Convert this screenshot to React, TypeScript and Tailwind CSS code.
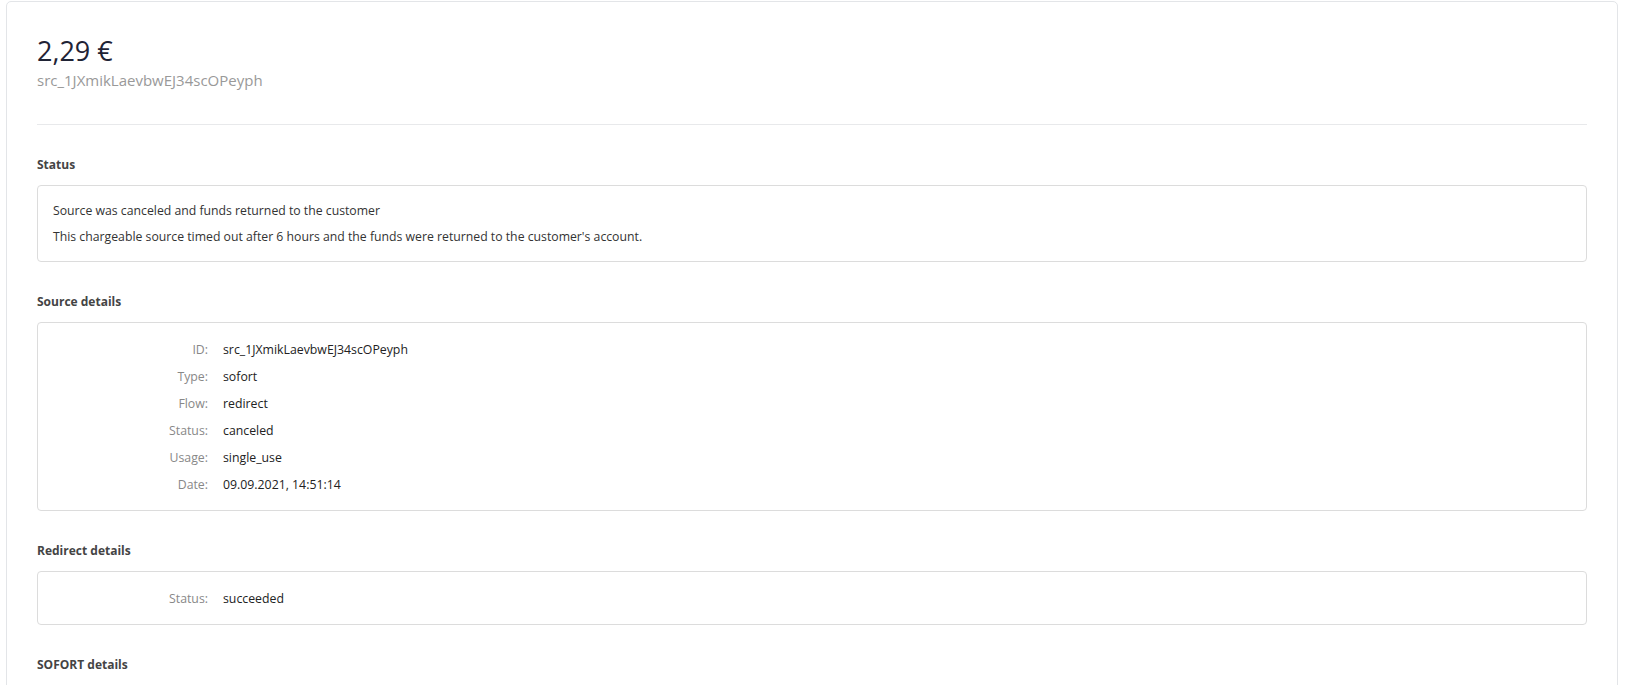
const rows = [
  { label: 'ID', value: 'src_1JXmikLaevbwEJ34scOPeyph' },
  { label: 'Type', value: 'sofort' },
  { label: 'Flow', value: 'redirect' },
  { label: 'Status', value: 'canceled' },
  { label: 'Usage', value: 'single_use' },
  { label: 'Date', value: '09.09.2021, 14:51:14' },
]

function Section({ title, children }: { title: string; children?: React.ReactNode }) {
  return (
    <section className="mt-[31px]">
      <h3 className="text-[12px] leading-[18px] font-bold text-[#444]">{title}</h3>
      {children && (
        <div className="mt-[11px] rounded-[4px] border border-[#dcdcdc] bg-white">{children}</div>
      )}
    </section>
  )
}

function DetailRows({ items }: { items: { label: string; value: string }[] }) {
  return (
    <dl className="grid grid-cols-[170px_1fr] gap-x-[15px] pt-[13px] pb-[12px] text-[12.3px] leading-[27px]">
      {items.map((r) => (
        <div key={r.label} className="contents">
          <dt className="text-right text-[#888]">{r.label}:</dt>
          <dd className="text-[#222]">{r.value}</dd>
        </div>
      ))}
    </dl>
  )
}

export default function App() {
  return (
    <div
      className="min-h-screen bg-white pl-[6px] pt-[1px]"
      style={{ fontFamily: '"Segoe UI", "Open Sans", "Noto Sans", sans-serif' }}
    >
      <div className="h-[720px] w-[1612px] rounded-[5px] border border-[#e3e5e8] px-[30px] pt-[30px]">
        {/* Header */}
        <div className="border-b border-[#e8e9eb] pb-[33px]">
          <h1 className="text-[27px] leading-[38px] text-[#1f2335]">2,29 €</h1>
          <p className="text-[15px] leading-[21px] text-[#999]">src_1JXmikLaevbwEJ34scOPeyph</p>
        </div>

        <Section title="Status">
          <div className="px-[15px] py-3 text-[12.25px] leading-[25.5px] text-[#333]">
            <p>Source was canceled and funds returned to the customer</p>
            <p>This chargeable source timed out after 6 hours and the funds were returned to the customer's account.</p>
          </div>
        </Section>

        <Section title="Source details">
          <DetailRows items={rows} />
        </Section>

        <Section title="Redirect details">
          <DetailRows items={[{ label: 'Status', value: 'succeeded' }]} />
        </Section>

        <Section title="SOFORT details" />
      </div>
    </div>
  )
}
